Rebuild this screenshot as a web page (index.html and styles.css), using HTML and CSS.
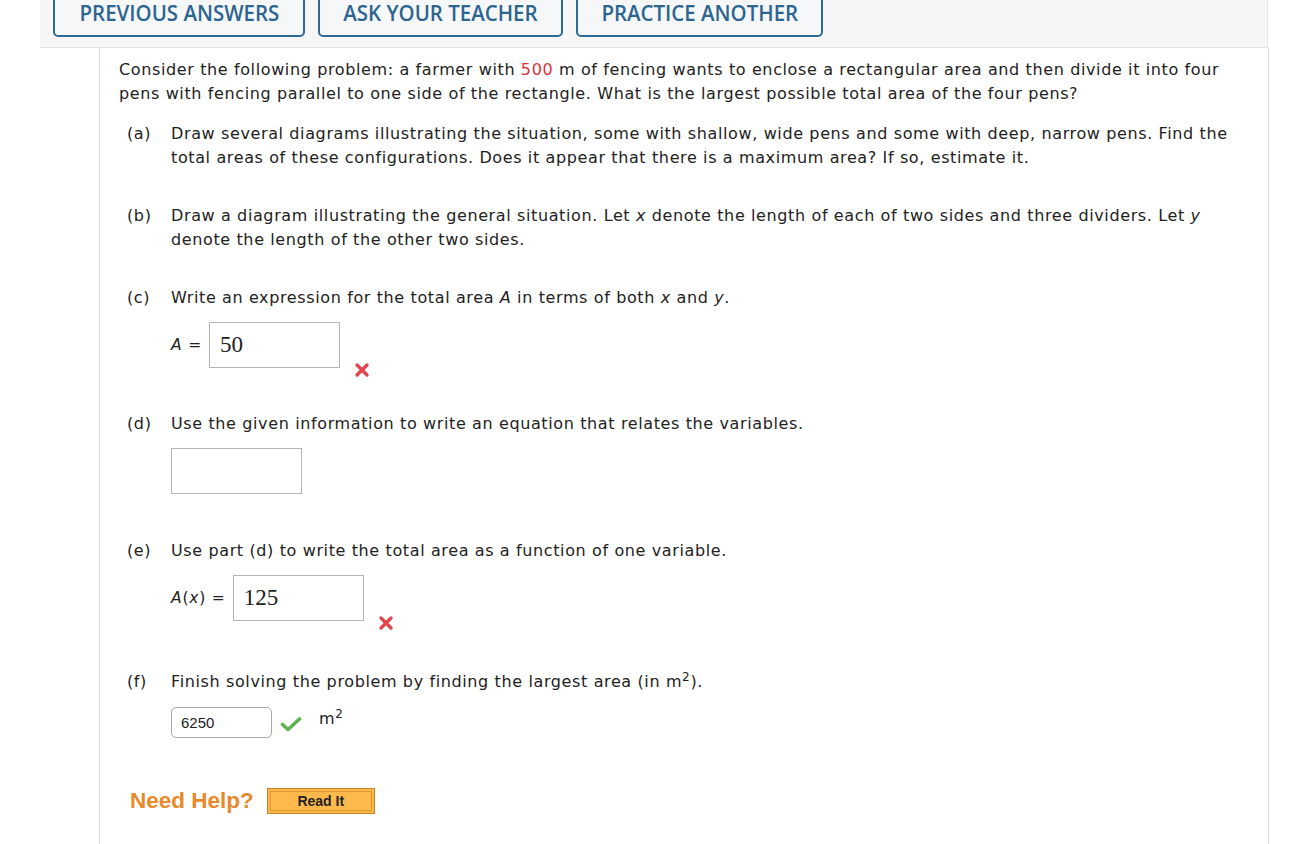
FILE: index.html
```html
<!DOCTYPE html>
<html>
<head>
<meta charset="utf-8">
<link rel="stylesheet" href="styles.css">
</head>
<body>
<div class="toolbar">
  <button class="tbtn w1"><span>PREVIOUS ANSWERS</span></button>
  <button class="tbtn w2"><span>ASK YOUR TEACHER</span></button>
  <button class="tbtn w3"><span>PRACTICE ANOTHER</span></button>
</div>
<div class="panel">
  <p class="intro">Consider the following problem: a farmer with <span class="red">500</span> m of fencing wants to enclose a rectangular area and then divide it into four pens with fencing parallel to one side of the rectangle. What is the largest possible total area of the four pens?</p>

  <div class="part pa">
    <div class="lbl">(a)</div>
    <div class="body">Draw several diagrams illustrating the situation, some with shallow, wide pens and some with deep, narrow pens. Find the total areas of these configurations. Does it appear that there is a maximum area? If so, estimate it.</div>
  </div>

  <div class="part pb">
    <div class="lbl">(b)</div>
    <div class="body">Draw a diagram illustrating the general situation. Let <i>x</i> denote the length of each of two sides and three dividers. Let <i>y</i> denote the length of the other two sides.</div>
  </div>

  <div class="part pc">
    <div class="lbl">(c)</div>
    <div class="body">
      <div>Write an expression for the total area <i>A</i> in terms of both <i>x</i> and <i>y</i>.</div>
      <div class="ansrow">
        <span class="eq"><i>A</i> =</span>
        <span class="mbox wc">50</span>
        <svg class="xmark" width="16" height="16" viewBox="0 0 16 16"><path d="M3 3 L13 13 M13 3 L3 13" stroke="#e2464c" stroke-width="3.4" stroke-linecap="round"/></svg>
      </div>
    </div>
  </div>

  <div class="part pd">
    <div class="lbl">(d)</div>
    <div class="body">
      <div>Use the given information to write an equation that relates the variables.</div>
      <div class="ansrow">
        <span class="mbox wd"></span>
      </div>
    </div>
  </div>

  <div class="part pe">
    <div class="lbl">(e)</div>
    <div class="body">
      <div>Use part (d) to write the total area as a function of one variable.</div>
      <div class="ansrow">
        <span class="eq"><i>A</i>(<i>x</i>) =</span>
        <span class="mbox we">125</span>
        <svg class="xmark" width="16" height="16" viewBox="0 0 16 16"><path d="M3 3 L13 13 M13 3 L3 13" stroke="#e2464c" stroke-width="3.4" stroke-linecap="round"/></svg>
      </div>
    </div>
  </div>

  <div class="part pf">
    <div class="lbl">(f)</div>
    <div class="body">
      <div>Finish solving the problem by finding the largest area (in m<sup>2</sup>).</div>
      <div class="ansrow frow">
        <span class="numbox">6250</span>
        <svg class="check" width="22" height="16" viewBox="0 0 22 16"><path d="M2.5 8.5 L8 13.5 L19.5 3" fill="none" stroke="#5db54f" stroke-width="3.6" stroke-linecap="round" stroke-linejoin="round"/></svg>
        <span class="unit">m<sup>2</sup></span>
      </div>
    </div>
  </div>

  <div class="help">
    <span class="needhelp">Need Help?</span>
    <button class="readit"><span>Read It</span></button>
  </div>
</div>
</body>
</html>
```

FILE: styles.css
```css
html, body {
  margin: 0;
  padding: 0;
  background: #ffffff;
}
body {
  font-family: "DejaVu Sans", Verdana, sans-serif;
  font-size: 16px;
  color: #222222;
  overflow: hidden;
  height: 844px;
}
.toolbar {
  margin-left: 40px;
  width: 1228px;
  height: 48px;
  box-sizing: border-box;
  background: #f6f6f6;
  border-bottom: 1px solid #e4e4e4;
  border-right: 1px solid #e4e4e4;
  padding-left: 13px;
  display: flex;
  gap: 13px;
  align-items: flex-start;
  overflow: hidden;
}
.tbtn {
  margin-top: -10px;
  height: 47px;
  box-sizing: border-box;
  border: 2px solid #2e6a96;
  border-radius: 5px;
  background: #f6f7f8;
  color: #2c6590;
  font-family: "Open Sans", sans-serif;
  font-weight: 600;
  font-size: 22px;
  padding: 0 0 3px 0;
  text-align: center;
  white-space: nowrap;
}
.tbtn span {
  display: inline-block;
  transform: scaleX(0.93);
}
.w1 { width: 252px; }
.w2 { width: 245px; }
.w3 { width: 247px; }
.panel {
  margin-left: 99px;
  width: 1170px;
  height: 796px;
  box-sizing: border-box;
  border-left: 1px solid #e2e2e2;
  border-right: 1px solid #e2e2e2;
  padding: 10px 0 0 19px;
  letter-spacing: 0.62px;
}
.intro {
  margin: 0;
  width: 1125px;
  line-height: 24px;
}
.red { color: #d9343a; }
.part {
  display: flex;
  line-height: 24px;
}
.lbl {
  width: 52px;
  padding-left: 8px;
  box-sizing: border-box;
  flex: none;
}
.body {
  width: 1075px;
}
.pa { margin-top: 16px; }
.pb { margin-top: 34px; }
.pc { margin-top: 34px; }
.pd { margin-top: 44px; }
.pe { margin-top: 45px; }
.pf { margin-top: 49px; }
.ansrow {
  display: flex;
  align-items: center;
  margin-top: 12px;
}
.eq {
  font-size: 15.5px;
  letter-spacing: 0.8px;
  margin-right: 7px;
}
.mbox {
  display: inline-block;
  height: 46px;
  box-sizing: border-box;
  border: 1px solid #b5b5b5;
  font-family: "Liberation Serif", "DejaVu Serif", serif;
  font-size: 23px;
  letter-spacing: 0;
  line-height: 44px;
  padding-left: 10px;
  color: #222;
}
.wc { width: 131px; }
.wd { width: 131px; }
.we { width: 131px; }
.xmark {
  align-self: flex-end;
  margin-left: 14px;
  margin-bottom: -10px;
}
.frow { margin-top: 13px; }
.numbox {
  width: 101px;
  height: 31px;
  box-sizing: border-box;
  border: 1px solid #a9a9a9;
  border-radius: 5px;
  font-family: "Liberation Sans", Arial, sans-serif;
  font-size: 15px;
  letter-spacing: 0;
  line-height: 29px;
  padding-left: 9px;
}
.check {
  margin-left: 8px;
  margin-top: 2px;
}
.unit {
  margin-left: 17px;
  margin-top: -8px;
  font-size: 16px;
}
sup {
  font-size: 12px;
  line-height: 0;
}
.help {
  display: flex;
  align-items: center;
  margin-top: 50px;
  padding-left: 11px;
  letter-spacing: 0;
}
.needhelp {
  font-family: "Liberation Sans", Arial, sans-serif;
  font-weight: bold;
  font-size: 22.5px;
  color: #e8892c;
}
.readit {
  margin-left: 13px;
  width: 108px;
  height: 26px;
  box-sizing: border-box;
  padding: 2px;
  border: 1px solid #c5862c;
  background: #fbb64a;
  font-family: "Liberation Sans", Arial, sans-serif;
  font-weight: bold;
  font-size: 14px;
  color: #222222;
}
.readit span {
  display: block;
  height: 100%;
  box-sizing: border-box;
  border: 1px solid #e19a32;
  background: #fdb94c;
  line-height: 18px;
}
```
